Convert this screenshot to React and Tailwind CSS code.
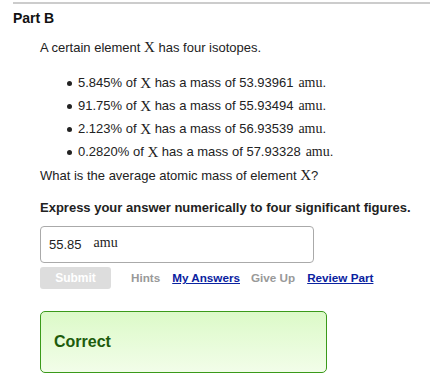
const serif = "font-['Liberation_Serif','Times_New_Roman',serif]"

const isotopes = [
  ['5.845%', '53.93961'],
  ['91.75%', '55.93494'],
  ['2.123%', '56.93539'],
  ['0.2820%', '57.93328'],
]

const X = () => <span className={`${serif} text-[15px] leading-[18px]`}>X</span>
const Amu = () => <span className={`${serif} text-[14px] leading-[18px] ml-[5px]`}>amu</span>

export default function App() {
  return (
    <div className="w-[430px] h-[376px] bg-white font-['Liberation_Sans',Arial,sans-serif] text-[13px] text-[#222] overflow-hidden">
      <div className="ml-[13px] mt-[2px] h-[2px] bg-[#cccccc]" />

      <h2 className="ml-[13px] mt-[6px] h-[16px] text-[14px] font-bold leading-[16px] text-[#111]">Part B</h2>

      <div className="ml-[40px] flex flex-col">
        <p className="mt-[12px] h-[18px] leading-[18px] whitespace-nowrap">A certain element <X /> has four isotopes.</p>

        <ul className="mt-[18px] ml-[27px] flex flex-col gap-[5px]">
          {isotopes.map(([pct, mass]) => (
            <li key={pct} className="flex items-center h-[18px] leading-[18px] whitespace-pre">
              <span className="w-[5px] h-[5px] rounded-full bg-[#222] mr-[6px]" />
              <span>{pct} of </span><X /><span> has a mass of {mass}</span><Amu /><span>.</span>
            </li>
          ))}
        </ul>

        <p className="mt-[5px] h-[18px] leading-[18px] whitespace-nowrap">What is the average atomic mass of element <X />?</p>

        <p className="mt-[15px] h-[18px] leading-[18px] font-bold text-[#222] whitespace-nowrap">Express your answer numerically to four significant figures.</p>

        <div className="mt-[9px] w-[274px] h-[37px] border border-[#aaaaaa] rounded-[4px] flex items-center pl-[8px]">
          <span className="text-[13px] leading-[18px]">55.85</span>
          <span className={`${serif} text-[14px] leading-[18px] ml-[12px] -mt-[3px]`}>amu</span>
        </div>

        <div className="mt-[4px] flex items-center h-[22px] text-[11.7px] font-bold">
          <button className="w-[71px] h-[22px] rounded-[3px] bg-[#dddddd] text-white text-[12px] font-bold">Submit</button>
          <span className="ml-[20px] text-[#999999]">Hints</span>
          <span className="ml-[12px] text-[#0a22a0] underline">My Answers</span>
          <span className="ml-[11px] text-[#999999]">Give Up</span>
          <span className="ml-[12px] text-[#0a22a0] underline">Review Part</span>
        </div>

        <div className="mt-[22px] w-[287px] h-[62px] rounded-[5px] border border-[#3a9a1a] bg-gradient-to-b from-[#dcfac8] to-[#f2fde9] flex items-center pl-[13px]">
          <span className="text-[16px] font-bold text-[#1d5c0c]">Correct</span>
        </div>
      </div>
    </div>
  )
}
